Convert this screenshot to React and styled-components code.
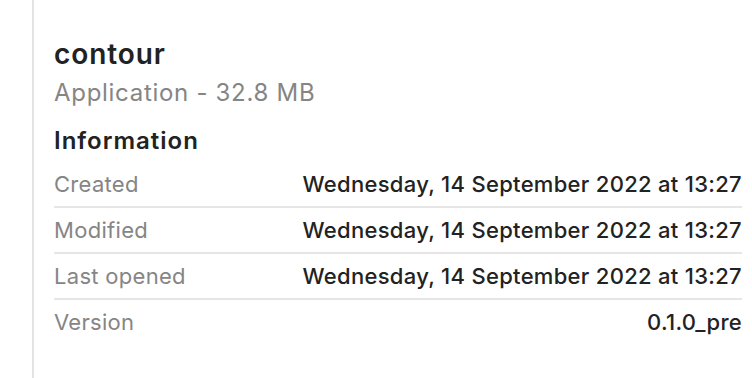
import React from "react";
import styled, { createGlobalStyle } from "styled-components";

const GlobalStyle = createGlobalStyle`
	html, body {
		margin: 0;
		padding: 0;
		background: #ffffff;
		font-family: Inter, "Noto Sans", sans-serif;
		-webkit-font-smoothing: antialiased;
	}
`;

const Window = styled.div`
	display: flex;
	height: 378px;
	padding-left: 32px;
	box-sizing: border-box;
`;

const Panel = styled.section`
	flex: 1;
	border-left: 2px solid #e3e3e3;
	padding: 37px 10px 0 20px;
	display: flex;
	flex-direction: column;
`;

const Title = styled.h1`
	margin: 0;
	font-size: 28px;
	font-weight: 600;
	letter-spacing: 0.9px;
	color: #222222;
	line-height: 34px;
`;

const Subtitle = styled.div`
	font-size: 24px;
	letter-spacing: 0.7px;
	color: #858585;
	line-height: 34px;
	margin-top: 5px;
`;

const SectionTitle = styled.h2`
	margin: 14px 0 0;
	font-size: 24px;
	font-weight: 600;
	letter-spacing: 1px;
	color: #222222;
	line-height: 34px;
`;

const InfoList = styled.dl`
	margin: 4px 0 0;
`;

const Row = styled.div`
	display: flex;
	justify-content: space-between;
	align-items: center;
	height: 46px;
	border-bottom: 2px solid ${(p) => (p.$last ? "transparent" : "#e6e6e6")};
	box-sizing: border-box;
`;

const Label = styled.dt`
	font-size: 22px;
	letter-spacing: 0.3px;
	color: #858585;
`;

const Value = styled.dd`
	margin: 0;
	font-size: 22px;
	letter-spacing: 0.3px;
	font-weight: 500;
	color: #222222;
`;

const DATE = "Wednesday, 14 September 2022 at 13:27";

const rows = [
	{ label: "Created", value: DATE },
	{ label: "Modified", value: DATE },
	{ label: "Last opened", value: DATE },
	{ label: "Version", value: "0.1.0_pre" },
];

export default function App() {
	return (
		<>
			<GlobalStyle />
			<Window>
				<Panel>
					<Title>contour</Title>
					<Subtitle>Application - 32.8 MB</Subtitle>
					<SectionTitle>Information</SectionTitle>
					<InfoList>
						{rows.map((row, idx) => (
							<Row key={row.label} $last={idx === rows.length - 1}>
								<Label>{row.label}</Label>
								<Value>{row.value}</Value>
							</Row>
						))}
					</InfoList>
				</Panel>
			</Window>
		</>
	);
}
